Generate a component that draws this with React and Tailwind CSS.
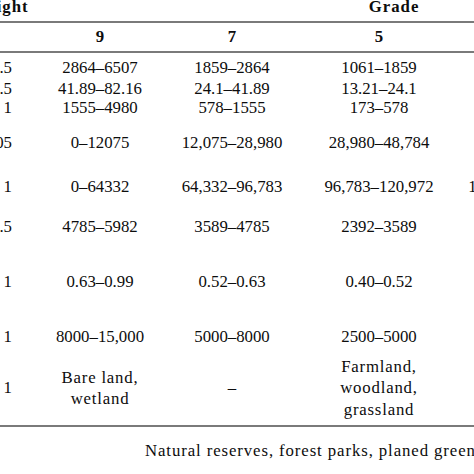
import React from "react";

const rows = [
  { h: "h-[26px] pt-[4px]", cells: ["1.5", "2864–6507", "1859–2864", "1061–1859", "472–1061"] },
  { h: "h-[20px]", cells: ["1.5", "41.89–82.16", "24.1–41.89", "13.21–24.1", "5.79–13.21"] },
  { h: "h-[26px] pb-[8px]", cells: ["1", "1555–4980", "578–1555", "173–578", "52–173"] },
  { h: "h-[40px] pb-[4px]", cells: ["0.05", "0–12075", "12,075–28,980", "28,980–48,784", "48,784–72,503"] },
  { h: "h-[42px] pt-[2px]", cells: ["1", "0–64332", "64,332–96,783", "96,783–120,972", "120,972–145,163"] },
  { h: "h-[47px] pb-[7px]", cells: ["1.5", "4785–5982", "3589–4785", "2392–3589", "1196–2392"] },
  { h: "h-[56px]", cells: ["1", "0.63–0.99", "0.52–0.63", "0.40–0.52", "0.28–0.40"] },
  { h: "h-[45px] pt-[9px]", cells: ["1", "8000–15,000", "5000–8000", "2500–5000", "1000–2500"] },
];

const Cols = ({ cells }) => (
  <>
    <div className="w-[100px] shrink-0 text-right pr-[36px]">{cells[0]}</div>
    <div className="w-[104px] shrink-0 text-center">{cells[1]}</div>
    <div className="w-[160px] shrink-0 text-center">{cells[2]}</div>
    <div className="w-[134px] shrink-0 text-center">{cells[3]}</div>
    <div className="w-[162px] shrink-0 text-center">{cells[4]}</div>
  </>
);

const App = () => {
  return (
    <div className="w-[474px] h-[474px] overflow-hidden bg-white text-[#0d0d0d] font-['Liberation_Serif',serif] text-[16.8px] leading-[20px]">
      <div className="ml-[-52px] mt-[-8px] w-[800px] flex flex-col">
        {/* header */}
        <div className="h-[31px] flex items-center font-bold tracking-[1px] border-b-[2px] border-[#7a7a7a]">
          <div className="w-[100px] shrink-0 text-center pl-[4px]">Weight</div>
          <div className="w-[692px] shrink-0 text-center">Grade</div>
        </div>
        <div className="h-[30px] flex items-center font-bold border-b-[2px] border-[#7a7a7a]">
          <Cols cells={["", "9", "7", "5", "3"]} />
        </div>

        {rows.map((r, i) => (
          <div key={i} className={"flex items-center " + r.h}>
            <Cols cells={r.cells} />
          </div>
        ))}

        <div className="h-[72px] flex items-center leading-[21.5px] border-b-[2px] border-[#7a7a7a] pb-[4px]">
          <Cols
            cells={[
              "1",
              <span className="tracking-[0.8px]">Bare land,<br />wetland</span>,
              "–",
              <span className="tracking-[0.8px]">Farmland,<br />woodland,<br />grassland</span>,
              "",
            ]}
          />
        </div>

        <div className="h-[48px] flex items-center">
          <div className="pl-[197px] whitespace-nowrap tracking-[0.9px]">
            Natural reserves, forest parks, planed green spaces
          </div>
        </div>
      </div>
    </div>
  );
};

export default App;
